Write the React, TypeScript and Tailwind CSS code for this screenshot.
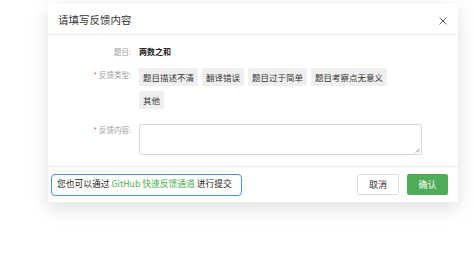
import React from "react";

const font = { fontFamily: '"Noto Sans CJK SC", "Noto Sans", sans-serif' };

export default function App() {
  const tags = ["题目描述不清", "翻译错误", "题目过于简单", "题目考察点无意义", "其他"];
  return (
    <div className="w-[474px] h-[260px] bg-white overflow-hidden pt-[4px]" style={font}>
      <div className="ml-[48px] w-[410px] bg-white shadow-[0_6px_18px_rgba(0,0,0,0.13)]">
        <div className="h-[31px] pt-[3px] flex items-center justify-between pl-[10px] pr-[11px] border-b border-[#ececec]">
          <span className="text-[10.5px] text-[#333] leading-none">请填写反馈内容</span>
          <svg width="8" height="8" viewBox="0 0 8 8" className="text-[#666]">
            <path d="M0.5 0.5 L7.5 7.5 M7.5 0.5 L0.5 7.5" stroke="currentColor" strokeWidth="1" />
          </svg>
        </div>
        <div className="grid grid-cols-[83px_1fr] gap-x-[8px] pt-[11px] pb-[11px] pr-[36px]">
          <div className="text-right text-[7.5px] text-[#a0a0a0] leading-[12px]">题目:</div>
          <div className="text-[8px] font-bold text-[#222] leading-[12px]">两数之和</div>

          <div className="text-right text-[7.5px] text-[#a0a0a0] leading-[12px] mt-[10px] pt-[1px]">
            <span className="text-[#e55] mr-[2px]">*</span>反馈类型:
          </div>
          <div className="flex flex-wrap gap-x-[4px] gap-y-[5px] mt-[10px] pr-[30px]">
            {tags.map((t) => (
              <span
                key={t}
                className="h-[18px] px-[4px] flex items-center bg-[#efefef] text-[8.5px] text-[#333] leading-none rounded-[1px]"
              >
                {t}
              </span>
            ))}
          </div>

          <div className="text-right text-[7.5px] text-[#a0a0a0] leading-[12px] mt-[15px]">
            <span className="text-[#e55] mr-[2px]">*</span>反馈内容:
          </div>
          <div className="mt-[15px] relative h-[31px] border border-[#d9d9d9] rounded-[2px] bg-white">
            <svg width="5" height="5" viewBox="0 0 5 5" className="absolute right-[1px] bottom-[1px] text-[#888]">
              <path d="M4.5 0.5 L0.5 4.5 M4.5 2.5 L2.5 4.5" stroke="currentColor" strokeWidth="0.8" />
            </svg>
          </div>
        </div>
        <div className="h-[36px] border-t border-[#ececec] flex items-center justify-between pl-[3px] pr-[10px]">
          <div className="h-[22px] w-[191px] flex items-center px-[5px] border-[1.5px] border-[#4a90e2] rounded-[4px] text-[8.75px] text-[#222] leading-none whitespace-nowrap">
            您也可以通过&nbsp;<span className="text-[#4caf50]">GitHub 快速反馈通道</span>&nbsp;进行提交
          </div>
          <div className="flex items-center gap-[8px]">
            <button className="h-[21px] w-[42px] border border-[#dcdcdc] rounded-[2px] bg-white text-[9px] text-[#333] leading-none">
              取消
            </button>
            <button className="h-[21px] w-[41px] rounded-[2px] bg-[#4fad5a] text-[9px] text-white leading-none">
              确认
            </button>
          </div>
        </div>
      </div>
    </div>
  );
}
